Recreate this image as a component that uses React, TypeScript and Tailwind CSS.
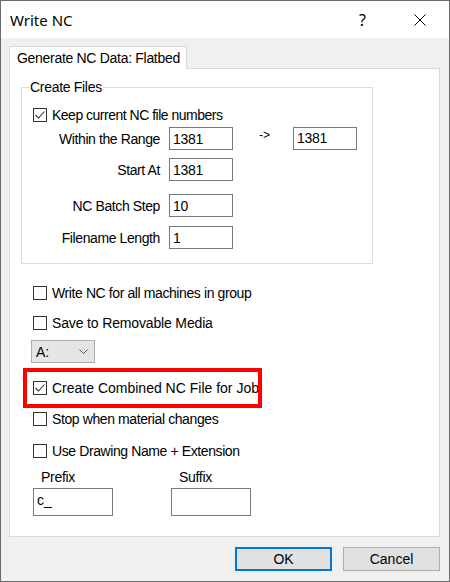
import React from 'react';

const sans = "font-['Liberation_Sans',Arial,sans-serif]";

function Box({ checked }: { checked?: boolean }) {
    return (
        <span className="w-[14px] h-[14px] border border-[#333333] bg-white flex items-center justify-center shrink-0">
            {checked && (
                <svg width="12" height="12" viewBox="0 0 12 12">
                    <polyline points="1.5,6 4.5,9 10.5,2.5" fill="none" stroke="#333333" strokeWidth="1.1" />
                </svg>
            )}
        </span>
    );
}

function CheckRow({ label, checked, className = '', textClass = 'tracking-[-0.35px]' }: { label: string; checked?: boolean; className?: string; textClass?: string }) {
    return (
        <div className={`flex items-center h-[14px] gap-[5px] ${className}`}>
            <Box checked={checked} />
            <span className={`text-[14px] leading-[16px] whitespace-nowrap ${textClass}`}>{label}</span>
        </div>
    );
}

function Field({ value, className = '' }: { value?: string; className?: string }) {
    return (
        <div className={`w-[64px] h-[23px] border border-[#7a7a7a] bg-white flex items-center pl-[3px] text-[14px] leading-[16px] tracking-[-0.3px] ${className}`}>
            {value}
        </div>
    );
}

function RangeRow({ label, value, className = '', children }: { label: string; value: string; className?: string; children?: React.ReactNode }) {
    return (
        <div className={`flex items-center ${className}`}>
            <span className="w-[127px] text-right text-[14px] leading-[16px] tracking-[-0.4px] whitespace-nowrap">{label}</span>
            <Field value={value} className="ml-[9px]" />
            {children}
        </div>
    );
}

export default function App() {
    return (
        <div className={`w-[450px] h-[582px] border border-[#6b6b6b] flex flex-col bg-[#f0f0f0] text-black ${sans}`}>
            {/* title bar */}
            <div className="h-[37px] bg-white flex items-center pl-[9px]">
                <span className="font-['Noto_Sans',sans-serif] text-[15px] leading-[20px]">Write NC</span>
                <span className="ml-auto font-['Noto_Sans',sans-serif] text-[16px] leading-[20px]">?</span>
                <svg className="ml-[48px] mr-[23px]" width="12" height="12" viewBox="0 0 12 12">
                    <path d="M0.5 0.5 L11.5 11.5 M11.5 0.5 L0.5 11.5" stroke="#000" strokeWidth="1" />
                </svg>
            </div>

            {/* tab + panel */}
            <div className="pt-[8px] pl-[8px]">
                <div className="relative z-10 -mb-[1px] w-[178px] h-[23px] bg-white border-t border-l border-r border-[#d9d9d9] flex items-center pl-[7px] pb-[1px] text-[14px] leading-[16px] tracking-[-0.3px] whitespace-nowrap">
                    Generate NC Data: Flatbed
                </div>
                <div className="w-[431px] h-[469px] bg-white border border-[#d9d9d9] flex flex-col">
                    {/* Create Files group */}
                    <div className="relative mt-[18px] ml-[11px] w-[352px] h-[177px] border border-[#dcdcdc] pt-[20px] pl-[11px]">
                        <span className="absolute left-[7px] top-[-9px] bg-white px-[1px] text-[14px] leading-[16px] tracking-[-0.3px]">Create Files</span>
                        <CheckRow label="Keep current NC file numbers" checked textClass="tracking-[-0.5px]" />
                        <RangeRow label="Within the Range" value="1381" className="mt-[5px]">
                            <span className="ml-[26px] w-[34px] mb-[8px] text-[12px] leading-[14px]">-&gt;</span>
                            <Field value="1381" className="-mt-[1px]" />
                        </RangeRow>
                        <RangeRow label="Start At" value="1381" className="mt-[8px]" />
                        <RangeRow label="NC Batch Step" value="10" className="mt-[13px]" />
                        <RangeRow label="Filename Length" value="1" className="mt-[9px]" />
                    </div>

                    {/* options */}
                    <div className="pl-[23px] flex flex-col">
                        <CheckRow label="Write NC for all machines in group" className="mt-[22px]" textClass="tracking-[-0.4px]" />
                        <CheckRow label="Save to Removable Media" className="mt-[16px]" textClass="tracking-[-0.15px]" />
                        <div className="mt-[10px] -ml-[2px] w-[64px] h-[23px] bg-[#e5e5e5] border border-[#adadad] flex items-center pl-[4px] pr-[6px] text-[14px] leading-[16px]">
                            <span>A:</span>
                            <svg className="ml-auto" width="9" height="6" viewBox="0 0 9 6">
                                <polyline points="0.5,0.5 4.5,4.5 8.5,0.5" fill="none" stroke="#555" strokeWidth="1" />
                            </svg>
                        </div>
                        <div className="relative mt-[18px] self-start">
                            <CheckRow label="Create Combined NC File for Job" checked textClass="tracking-[0px]" />
                            <div className="absolute left-[-10px] top-[-13px] w-[239px] h-[40px] border-[4px] border-[#ff0000]" />
                        </div>
                        <CheckRow label="Stop when material changes" className="mt-[17px]" textClass="tracking-[-0.4px]" />
                        <CheckRow label="Use Drawing Name + Extension" className="mt-[18px]" textClass="tracking-[-0.4px]" />
                        <div className="mt-[11px] flex gap-[58px]">
                            <div className="w-[80px] flex flex-col">
                                <span className="pl-[8px] text-[14px] leading-[16px] tracking-[-0.3px]">Prefix</span>
                                <div className="mt-[3px] h-[28px] border border-[#7a7a7a] bg-white pl-[3px] pt-[3px] text-[14px] leading-[16px]">c_</div>
                            </div>
                            <div className="w-[80px] flex flex-col">
                                <span className="pl-[8px] text-[14px] leading-[16px] tracking-[-0.3px]">Suffix</span>
                                <div className="mt-[3px] h-[28px] border border-[#7a7a7a] bg-white" />
                            </div>
                        </div>
                    </div>
                </div>
            </div>

            {/* buttons */}
            <div className="mt-[10px] flex justify-end gap-[11px] pr-[9px]">
                <button className="w-[97px] h-[24px] bg-[#e1e1e1] border-2 border-[#0078d7] text-[14px] leading-[16px]">OK</button>
                <button className="w-[97px] h-[24px] bg-[#e1e1e1] border border-[#adadad] text-[14px] leading-[16px]">Cancel</button>
            </div>
        </div>
    );
}
